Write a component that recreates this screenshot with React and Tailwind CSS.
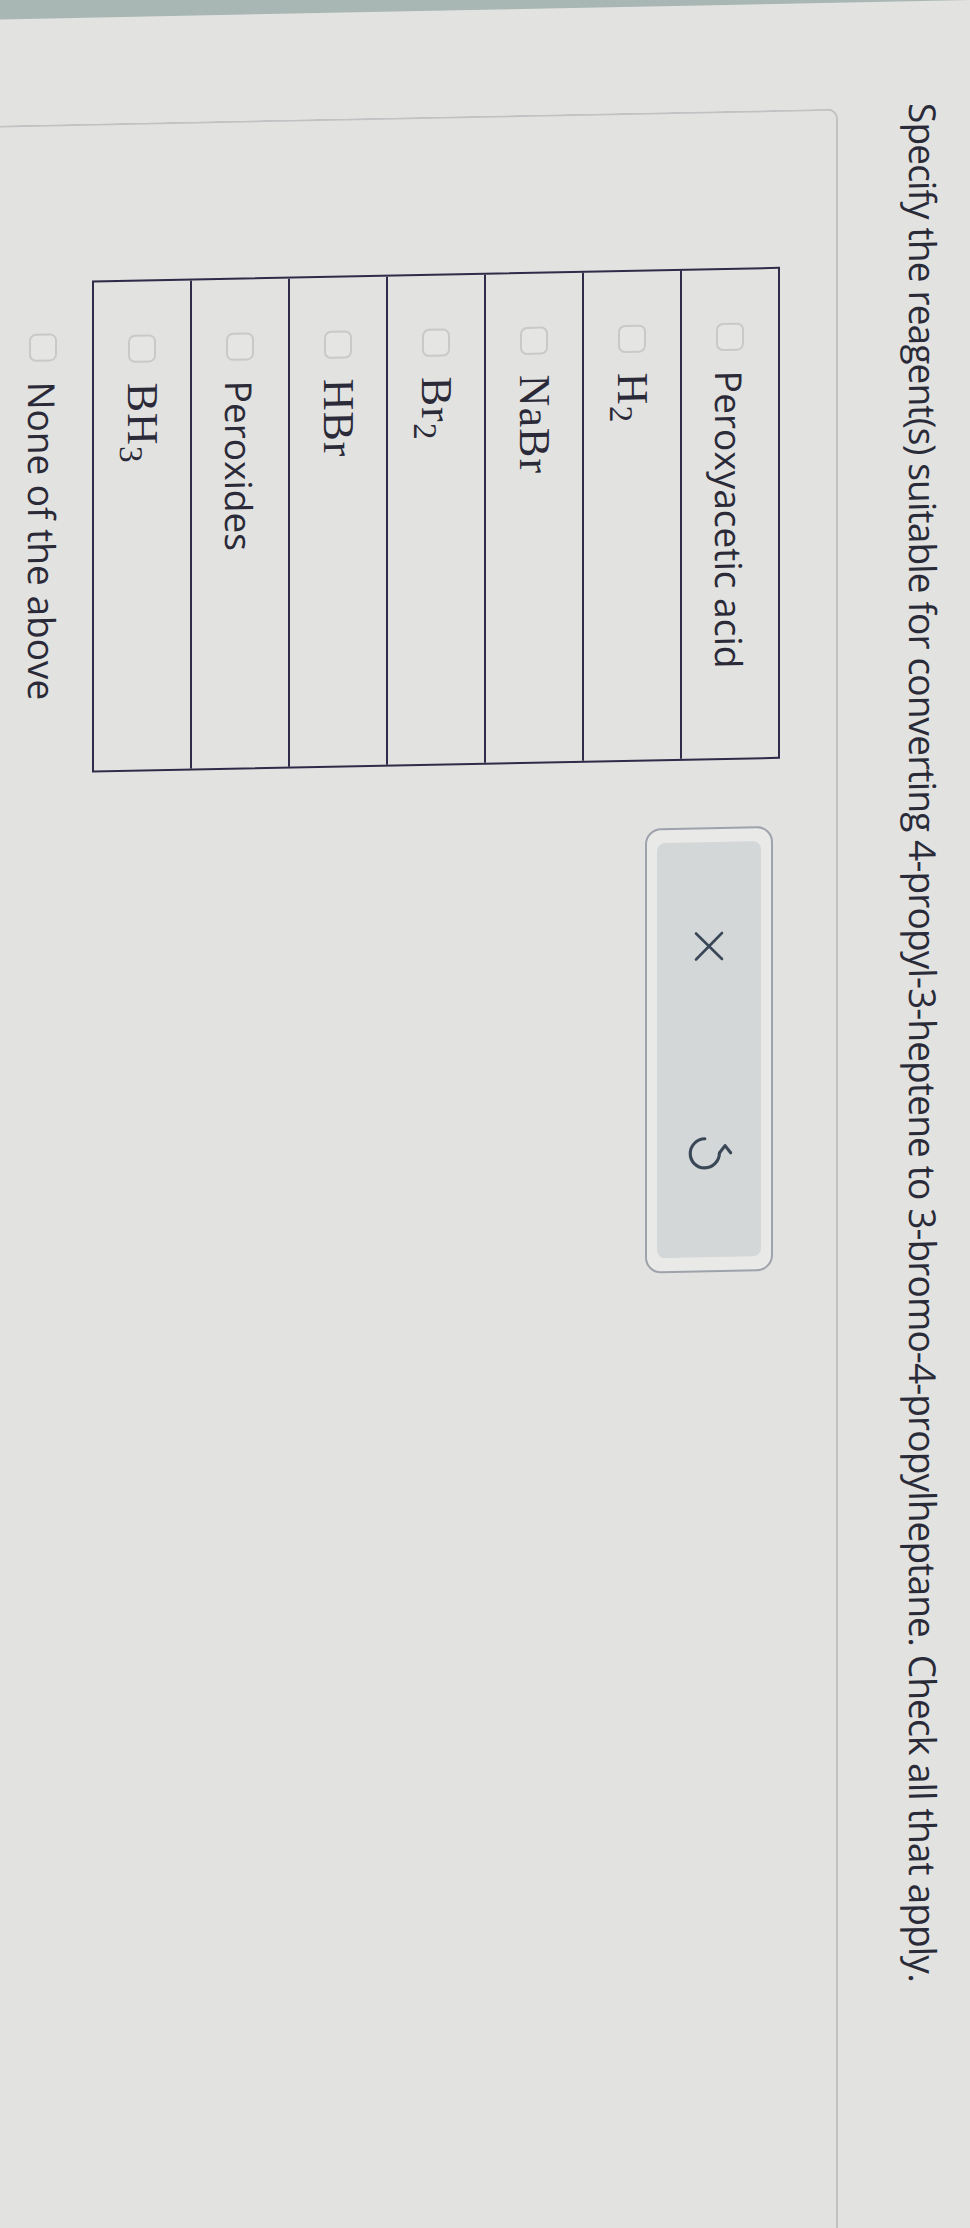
import React from "react";

const options = [
  { id: "peroxyacetic", text: "Peroxyacetic acid" },
  { id: "h2", formula: "H", sub: "2" },
  { id: "nabr", formula: "NaBr" },
  { id: "br2", formula: "Br", sub: "2" },
  { id: "hbr", formula: "HBr" },
  { id: "peroxides", text: "Peroxides" },
  { id: "bh3", formula: "BH", sub: "3" },
];

function CheckBox() {
  return (
    <span className="inline-block h-[28px] w-[28px] shrink-0 rounded-[7px] border-[2.5px] border-[#c8c9c9] bg-[#e5e5e3]" />
  );
}

function Label({ option }) {
  if (option.text) {
    return (
      <span className="font-['Open_Sans',sans-serif] text-[37px] leading-none text-[#2b2a38]">
        {option.text}
      </span>
    );
  }

  return (
    <span className="font-['Liberation_Serif',serif] text-[44px] leading-none tracking-[1px] text-[#2b2a38]">
      {option.formula}
      {option.sub && <sub className="text-[33px]">{option.sub}</sub>}
    </span>
  );
}

function UndoIcon() {
  return (
    <svg
      width="50"
      height="50"
      viewBox="0 0 24 24"
      fill="none"
      stroke="#394757"
      strokeWidth="1.5"
      strokeLinecap="round"
      strokeLinejoin="round"
    >
      <path d="M5 14 A7 7 0 1 0 12 7" />
      <path d="M12 7 L8.5 4.3 L12 1.6" />
    </svg>
  );
}

function CloseIcon() {
  return (
    <svg width="30" height="30" viewBox="0 0 30 30" fill="none" stroke="#394757" strokeWidth="2.6" strokeLinecap="round">
      <path d="M2 2 L28 28" />
      <path d="M28 2 L2 28" />
    </svg>
  );
}

export default function App() {
  return (
    <div className="relative h-[2228px] w-[970px] overflow-hidden bg-[#a8b6b4]">
      {/* the photo is turned a quarter round, so the page is laid out upright and turned */}
      <div className="absolute left-0 top-0 flex h-[970px] w-[2260px] origin-top-left translate-x-[970px] rotate-90 skew-x-[1.15deg] flex-col bg-[#e2e2e0]">
        <div className="h-[132px] shrink-0 whitespace-nowrap pl-[102px] pt-[25px] font-['Open_Sans',sans-serif] text-[37px] leading-[1.2] tracking-[-0.85px] text-[#2a2b38]">
          Specify the reagent(s) suitable for converting 4-propyl-3-heptene to 3-bromo-4-propylheptane. Check all that apply.
        </div>

        <div className="ml-[106px] flex flex-1 items-start gap-[67px] rounded-tl-[10px] border-l-2 border-t-2 border-[#c0c2c3] pl-[155px] pt-[56px]">
          <div className="flex flex-col">
            <div className="flex w-[492px] flex-col border-2 border-[#2f2b48]">
              {options.map((option, i) => (
                <div
                  key={option.id}
                  className={`flex items-center gap-[20px] pl-[53px] ${
                    i < options.length - 1 ? "h-[98px] border-b-2 border-[#2f2b48]" : "h-[96px]"
                  }`}
                >
                  <CheckBox />
                  <Label option={option} />
                </div>
              ))}
            </div>

            <div className="mt-[21px] flex h-[56px] items-center gap-[20px] pl-[52px]">
              <CheckBox />
              <span className="font-['Open_Sans',sans-serif] text-[37px] leading-none text-[#2b2a38]">
                None of the above
              </span>
            </div>
          </div>

          <div className="mt-[7px] h-[128px] w-[445px] rounded-[16px] border-2 border-[#9ea3ab] bg-[#e9e9e8] px-[13px] py-[10px]">
            <div className="flex h-full rounded-[8px] bg-[#d3d7d8]">
              <div className="flex flex-1 items-center justify-center">
                <CloseIcon />
              </div>
              <div className="flex flex-1 items-center justify-center">
                <UndoIcon />
              </div>
            </div>
          </div>
        </div>
      </div>
    </div>
  );
}
